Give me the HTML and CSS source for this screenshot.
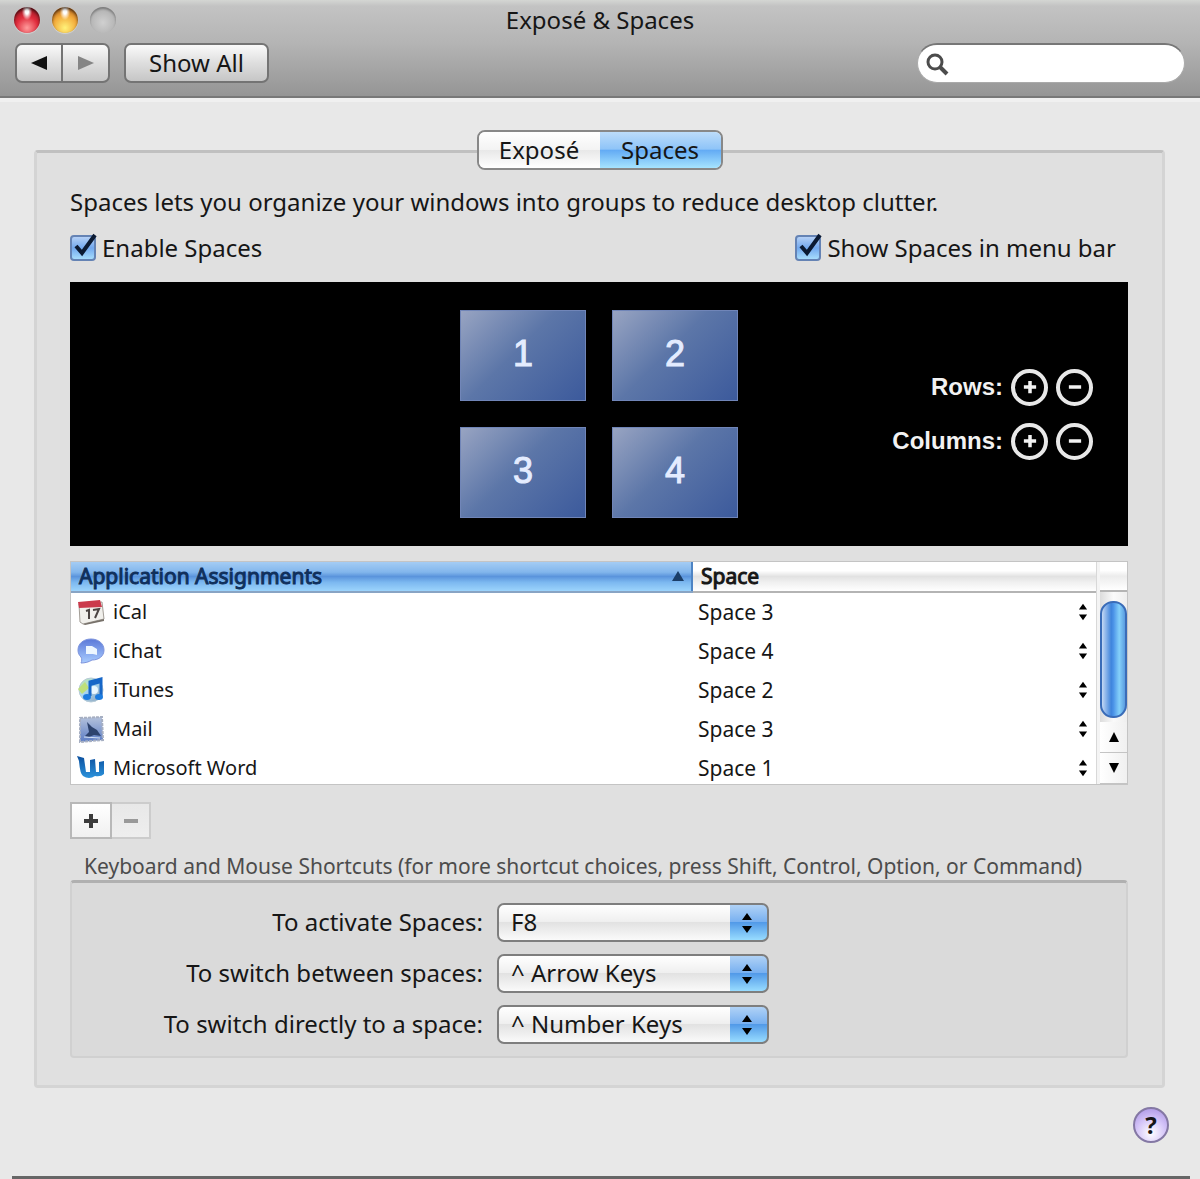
FILE: index.html
```html
<!DOCTYPE html>
<html lang="en">
<head>
<meta charset="utf-8">
<meta name="viewport" content="width=device-width, initial-scale=1">
<title>Exposé &amp; Spaces</title>
<link rel="stylesheet" href="styles.css">
</head>
<body>
<svg class="defs" aria-hidden="true">
  <defs>
    <symbol id="updown" viewBox="0 0 12 22"><path d="M6 1 11 8H1ZM6 21 1 14H11Z"/></symbol>
    <symbol id="check" viewBox="0 0 28 32"><path d="M6 14 12 21 25 3" fill="none" stroke="#0b1a33" stroke-width="4"/></symbol>
    <symbol id="plus" viewBox="0 0 16 16"><path d="M8 1V15M1 8H15" fill="none" stroke="currentColor" stroke-width="4"/></symbol>
    <symbol id="minus" viewBox="0 0 16 16"><path d="M1 8H15" fill="none" stroke="currentColor" stroke-width="4"/></symbol>
    <linearGradient id="chatFill" x1="0" y1="0" x2="0" y2="1"><stop offset="0" stop-color="#5b78d8"/><stop offset="1" stop-color="#a9ccff"/></linearGradient>
    <linearGradient id="discFill" x1="0" y1="0" x2="1" y2="1"><stop offset="0" stop-color="#c8e890"/><stop offset=".4" stop-color="#a8d8f4"/><stop offset="1" stop-color="#8d9fb4"/></linearGradient>
    <linearGradient id="stampFill" x1="0" y1="0" x2="0" y2="1"><stop offset="0" stop-color="#b4c2dc"/><stop offset="1" stop-color="#5b7cc4"/></linearGradient>
    <linearGradient id="wordFill" x1="0" y1="0" x2="0" y2="1"><stop offset="0" stop-color="#0b4f9e"/><stop offset="1" stop-color="#2c93dc"/></linearGradient>
  </defs>
</svg>

<div class="window">
  <header class="titlebar">
    <div class="title-row">
      <div class="lights">
        <button class="light light-close" aria-label="Close"></button>
        <button class="light light-minimize" aria-label="Minimize"></button>
        <button class="light light-zoom" aria-label="Zoom" disabled></button>
      </div>
      <h1 class="title">Exposé &amp; Spaces</h1>
    </div>
    <div class="toolbar">
      <div class="history">
        <button class="tool-button" aria-label="Back"><svg width="18" height="16" viewBox="0 0 18 16"><path d="M1 8 17 1V15Z" fill="#111"/></svg></button>
        <button class="tool-button" aria-label="Forward" disabled><svg width="18" height="16" viewBox="0 0 18 16"><path d="M17 8 1 1V15Z" fill="#858585"/></svg></button>
      </div>
      <button class="tool-button show-all">Show All</button>
      <label class="search">
        <svg width="24" height="24" viewBox="0 0 24 24" fill="none" stroke="#4c4c4c"><circle cx="9" cy="10" r="7" stroke-width="3"/><path d="M14 15 21 22" stroke-width="4"/></svg>
        <input type="search" aria-label="Search">
      </label>
    </div>
  </header>

  <main class="content">
    <nav class="tabs" aria-label="Panes">
      <button class="tab">Exposé</button>
      <button class="tab tab-selected">Spaces</button>
    </nav>

    <section class="panel">
      <p class="intro">Spaces lets you organize your windows into groups to reduce desktop clutter.</p>
      <div class="options">
        <label class="option"><span class="tick"><input type="checkbox" checked><svg><use href="#check"/></svg></span>Enable Spaces</label>
        <label class="option"><span class="tick"><input type="checkbox" checked><svg><use href="#check"/></svg></span>Show Spaces in menu bar</label>
      </div>

      <div class="preview">
        <div class="spaces">
          <div class="space">1</div>
          <div class="space">2</div>
          <div class="space">3</div>
          <div class="space">4</div>
        </div>
        <div class="counts">
          <span>Rows:</span>
          <button class="round" aria-label="Add row"><svg><use href="#plus"/></svg></button>
          <button class="round" aria-label="Remove row"><svg><use href="#minus"/></svg></button>
          <span>Columns:</span>
          <button class="round" aria-label="Add column"><svg><use href="#plus"/></svg></button>
          <button class="round" aria-label="Remove column"><svg><use href="#minus"/></svg></button>
        </div>
      </div>

      <div class="assignments">
        <table class="apps">
          <thead>
            <tr>
              <th class="col-app" scope="col"><div class="sorted">Application Assignments<svg width="14" height="12" viewBox="0 0 14 12"><path d="M7 1 13 11H1Z" fill="#1b3e68"/></svg></div></th>
              <th class="col-space" scope="col">Space</th>
            </tr>
          </thead>
          <tbody>
            <tr>
              <td><div class="app"><svg class="app-icon" viewBox="0 0 28 28"><path d="M2 6 25 4 27 21 6 26 3 24Z" fill="#f1f0ec" stroke="#a29d96"/><path d="M6 26 27 21V23L8 27Z" fill="#77716a"/><path d="M1 4 23 2 25 9 2 10Z" fill="#cb3a4c"/><path d="M9 13 12 12V21M16 12 22 11 18 20" fill="none" stroke="#4c4543" stroke-width="2"/></svg>iCal</div></td>
              <td><div class="popup"><select aria-label="Space for iCal"><option>Space 3</option></select><svg><use href="#updown"/></svg></div></td>
            </tr>
            <tr>
              <td><div class="app"><svg class="app-icon" viewBox="0 0 28 28"><path d="M14 2C22 2 27 7 27 13S22 23 15 23C12 25 8 26 4 26 5 24 5 22 4 20 2 18 1 16 1 13 1 7 6 2 14 2Z" fill="url(#chatFill)" stroke="#7d94dd"/><path d="M9 9H15L20 12V18L16 17H9Z" fill="#edf6ff"/></svg>iChat</div></td>
              <td><div class="popup"><select aria-label="Space for iChat"><option>Space 4</option></select><svg><use href="#updown"/></svg></div></td>
            </tr>
            <tr>
              <td><div class="app"><svg class="app-icon" viewBox="0 0 28 28"><circle cx="14" cy="14" r="12" fill="url(#discFill)" stroke="#b6cbd8"/><path d="M1 13 8 6 12 12 5 18Z" fill="#bfe07a"/><circle cx="17" cy="14" r="4" fill="#e9f7ff"/><path d="M13 20V6L24 3V20" fill="none" stroke="#1767c8" stroke-width="3"/><path d="M13 8 24 5" stroke="#1767c8" stroke-width="4"/><ellipse cx="10" cy="21" rx="4" ry="3" fill="#1c7ce0"/><ellipse cx="22" cy="21" rx="4" ry="3" fill="#1c7ce0"/></svg>iTunes</div></td>
              <td><div class="popup"><select aria-label="Space for iTunes"><option>Space 2</option></select><svg><use href="#updown"/></svg></div></td>
            </tr>
            <tr>
              <td><div class="app"><svg class="app-icon" viewBox="0 0 28 28"><path d="M3 3 25 2 26 25 3 27Z" fill="url(#stampFill)" stroke="#a6afc2" stroke-width="2" stroke-dasharray="3 1"/><path d="M10 7 15 12 20 15 24 21 17 20 12 22 8 21 12 17Z" fill="#2d436e"/><path d="M7 22 23 23" stroke="#d5e2f5"/></svg>Mail</div></td>
              <td><div class="popup"><select aria-label="Space for Mail"><option>Space 3</option></select><svg><use href="#updown"/></svg></div></td>
            </tr>
            <tr>
              <td><div class="app"><svg class="app-icon" viewBox="0 0 28 28"><path d="M0 2 7 4 9 18 13 18V6L18 5 19 18 22 18 22 8 27 7 27 20Q24 23 18 22 12 26 6 22 3 20 2 7Z" fill="url(#wordFill)"/></svg>Microsoft Word</div></td>
              <td><div class="popup"><select aria-label="Space for Microsoft Word"><option>Space 1</option></select><svg><use href="#updown"/></svg></div></td>
            </tr>
          </tbody>
        </table>
        <div class="scrollbar">
          <div class="corner"></div>
          <div class="track"><div class="thumb"></div></div>
          <button class="arrow" aria-label="Scroll up"><svg width="12" height="12" viewBox="0 0 12 12"><path d="M6 1 11 11H1Z"/></svg></button>
          <button class="arrow" aria-label="Scroll down"><svg width="12" height="12" viewBox="0 0 12 12"><path d="M6 11 1 1H11Z"/></svg></button>
        </div>
      </div>

      <div class="edit">
        <button class="edit-button" aria-label="Add application"><svg><use href="#plus"/></svg></button>
        <button class="edit-button" aria-label="Remove application" disabled><svg><use href="#minus"/></svg></button>
      </div>

      <h2 class="group-title">Keyboard and Mouse Shortcuts (for more shortcut choices, press Shift, Control, Option, or Command)</h2>
      <div class="group">
        <label for="activate">To activate Spaces:</label>
        <div class="menu"><select id="activate"><option>F8</option></select><svg><use href="#updown"/></svg></div>
        <label for="between">To switch between spaces:</label>
        <div class="menu"><select id="between"><option>^ Arrow Keys</option></select><svg><use href="#updown"/></svg></div>
        <label for="direct">To switch directly to a space:</label>
        <div class="menu"><select id="direct"><option>^ Number Keys</option></select><svg><use href="#updown"/></svg></div>
      </div>
    </section>

    <button class="help" aria-label="Help">?</button>
  </main>
</div>
</body>
</html>
```
FILE: styles.css
```css
* {
  box-sizing: border-box;
}

body {
  margin: 0;
  background: #e8e8e8;
  color: #161616;
  font-family: "Noto Sans", "Open Sans", sans-serif;
  font-size: 24px;
  line-height: 32px;
}

button,
input,
select {
  margin: 0;
  padding: 0;
  border: 0;
  color: inherit;
  font: inherit;
  appearance: none;
}

svg {
  display: block;
}

.defs {
  position: absolute;
  width: 0;
  height: 0;
}

.window {
  display: flex;
  flex-direction: column;
  min-height: 100vh;
}

.window::after {
  content: "";
  height: 3px;
  margin: 0 10px 0 12px;
  background: #666;
}

/* Title bar and toolbar */

.titlebar {
  padding-bottom: 13px;
  background: linear-gradient(#d4d6d3, #c3c3c3 6px, #b4b4b4 45%, #959595);
  border-bottom: 2px solid #787878;
}

.title-row {
  display: grid;
  grid-template-columns: 1fr auto 1fr;
  align-items: center;
  height: 43px;
  padding: 0 14px 4px;
}

.lights {
  display: flex;
  gap: 12px;
}

.light {
  width: 26px;
  height: 26px;
  border-radius: 50%;
  box-shadow: inset 0 2px 3px rgba(0, 0, 0, 0.6), 0 1px 1px rgba(255, 255, 255, 0.4);
}

.light-close {
  background: radial-gradient(ellipse at 50% 18%, #fff 0 8%, transparent 28%), radial-gradient(circle at 50% 80%, #ff9c9c, #e02c3c 45%, #7c1018);
}

.light-minimize {
  background: radial-gradient(ellipse at 50% 18%, #fff 0 8%, transparent 28%), radial-gradient(circle at 50% 80%, #fff27a, #f2a93a 50%, #a04a10);
}

.light-zoom {
  background: radial-gradient(circle at 50% 60%, #d0d0d0, #b8b8b8 55%, #8c8c8c);
  box-shadow: inset 0 2px 2px rgba(0, 0, 0, 0.25);
}

.title {
  margin: 0;
  font-size: 24px;
  font-weight: 400;
  line-height: 32px;
}

.toolbar {
  display: flex;
  align-items: center;
  gap: 14px;
  padding: 0 15px;
}

.history {
  display: flex;
}

.tool-button {
  display: flex;
  align-items: center;
  justify-content: center;
  width: 48px;
  height: 40px;
  border: 2px solid #747474;
  border-radius: 7px;
  background: linear-gradient(#fafafa, #dedede 50%, #c6c6c6);
}

.history .tool-button:first-child {
  border-radius: 7px 0 0 7px;
}

.history .tool-button:last-child {
  margin-left: -1px;
  border-left-width: 1px;
  border-radius: 0 7px 7px 0;
}

.show-all {
  width: 145px;
}

.search {
  display: flex;
  align-items: center;
  gap: 8px;
  width: 268px;
  height: 40px;
  margin-left: auto;
  padding: 0 16px 0 8px;
  border: 1px solid #aaa;
  border-top: 2px solid #777;
  border-radius: 20px;
  background: #fff;
}

.search input {
  flex: 1;
  min-width: 0;
  background: none;
  outline: 0;
}

/* Content */

.content {
  display: flex;
  flex: 1;
  flex-direction: column;
  padding: 28px 35px 0 34px;
  border-top: 4px solid #f0f0f0;
}

.tabs {
  display: flex;
  align-self: center;
  margin-bottom: -20px;
  border: 2px solid #888;
  border-radius: 8px;
  background: #f6f6f6;
  overflow: hidden;
  z-index: 1;
}

.tab {
  width: 121px;
  height: 36px;
  background: linear-gradient(#fff, #f3f3f3 50%, #e8e8e8 51%, #fff);
}

.tab-selected {
  background: linear-gradient(#bcdcfa, #8ec4f8 48%, #62aaf4 50%, #a6e4ff);
}

.panel {
  padding: 33px 34px 27px 33px;
  border: 3px solid #d4d4d4;
  border-top-color: #c0c0c0;
  border-radius: 4px;
  background: #e0e0e0;
}

.intro {
  margin: 0;
}

.options {
  display: flex;
  justify-content: space-between;
  margin-top: 14px;
  padding-right: 12px;
}

.option {
  display: flex;
  align-items: center;
  gap: 6px;
}

.tick {
  display: grid;
  width: 26px;
  height: 32px;
}

.tick > * {
  grid-area: 1 / 1;
}

.tick input {
  align-self: center;
  width: 26px;
  height: 26px;
  border: 2px solid #6583b4;
  border-radius: 4px;
  background: linear-gradient(#b4d0f6, #72a8ee 50%, #a6dcfc);
}

.tick svg {
  width: 28px;
  height: 32px;
  pointer-events: none;
}

.tick input:not(:checked) + svg {
  visibility: hidden;
}

/* Arrangement of the spaces */

.preview {
  display: grid;
  grid-template-columns: 1fr auto 1fr;
  align-items: center;
  margin-top: 18px;
  padding: 28px 35px;
  background: #000;
}

.spaces {
  display: grid;
  grid-column: 2;
  grid-template-columns: 126px 126px;
  gap: 26px;
}

.space {
  display: flex;
  align-items: center;
  justify-content: center;
  height: 91px;
  padding-bottom: 4px;
  border: 1px solid #7085b8;
  background: linear-gradient(135deg, #98a4c2, #5c76a8 45%, #3c5a9c);
  color: #e4ecff;
  font-family: "Liberation Sans", Arial, sans-serif;
  font-size: 36px;
  -webkit-text-stroke: 1px #e4ecff;
}

.counts {
  display: grid;
  grid-template-columns: auto 37px 37px;
  align-items: center;
  justify-self: end;
  gap: 17px 8px;
  color: #f2f2f2;
  font-family: "Liberation Sans", Arial, sans-serif;
  font-weight: 700;
  text-align: right;
}

.round {
  display: flex;
  align-items: center;
  justify-content: center;
  height: 37px;
  border: 4px solid #e8e8e8;
  border-radius: 50%;
  background: #000;
}

.round svg {
  width: 14px;
  height: 14px;
}

/* Application assignments */

.assignments {
  display: flex;
  height: 224px;
  margin-top: 15px;
  border: 1px solid #c4c4c4;
  background: #fff;
  overflow: hidden;
}

.apps {
  flex: 1;
  align-self: flex-start;
  border-collapse: collapse;
  table-layout: fixed;
  font-size: 20px;
  line-height: 28px;
}

.apps th {
  height: 30px;
  padding: 0 6px 2px 8px;
  border-bottom: 2px solid #b4b4b4;
  background: linear-gradient(#fff 30%, #e2e2e2 50%, #f0f0f0 70%, #fff);
  font-size: 21px;
  line-height: 26px;
  text-align: left;
  font-weight: 400;
  -webkit-text-stroke: 1px currentColor;
}

.apps .col-app {
  border-bottom-color: #88a4c4;
  border-right: 2px solid #4e84c4;
  background: linear-gradient(#a4ccf4, #82b6ec 35%, #5a94dc 50%, #7cb8f0 70%, #9cd4fc);
  color: #10305c;
}

.apps .col-space {
  width: 404px;
}

.sorted {
  display: flex;
  align-items: center;
  justify-content: space-between;
}

.apps td {
  height: 39px;
  padding: 0 6px;
}

.app {
  display: flex;
  align-items: center;
  gap: 8px;
}

.app-icon {
  width: 28px;
  height: 28px;
}

.popup,
.menu {
  display: grid;
  align-items: center;
}

.popup > *,
.menu > * {
  grid-area: 1 / 1;
}

.popup svg,
.menu svg {
  justify-self: end;
  pointer-events: none;
}

.popup svg {
  width: 10px;
  height: 18px;
  margin-right: 2px;
}

.popup select {
  background: none;
  font-size: 21px;
}

.scrollbar {
  display: flex;
  flex-direction: column;
  width: 31px;
  padding-left: 3px;
  border-left: 1px solid #d8d8d8;
  background: #f4f4f4;
}

.corner {
  height: 30px;
  border-bottom: 2px solid #b4b4b4;
  background: linear-gradient(#fff 30%, #ececec 50%, #fff);
}

.track {
  flex: 1;
  padding: 9px 0 4px;
  background: linear-gradient(90deg, #dcdcdc, #fafafa 50%, #eee);
}

.thumb {
  height: 100%;
  border: 2px solid #3a6cb8;
  border-radius: 13px;
  background: linear-gradient(90deg, #c4d8f4, #3e84dc 40%, #4c94e8 50%, #84d0fa 75%, #5a9ce0);
}

.arrow {
  display: flex;
  align-items: center;
  justify-content: center;
  height: 31px;
  border-bottom: 1px solid #c4c4c4;
  background: linear-gradient(90deg, #fff, #f0f0f0);
}

/* Add and remove buttons */

.edit {
  display: flex;
  margin-top: 17px;
}

.edit-button {
  display: flex;
  align-items: center;
  justify-content: center;
  width: 42px;
  height: 37px;
  border: 2px solid #b8b8b8;
  background: linear-gradient(#fff, #f0f0f0);
  color: #3c3c3c;
}

.edit-button:disabled {
  width: 39px;
  border-color: #ccc;
  border-left: 0;
  background: linear-gradient(#e8e8e8, #eee);
  color: #999;
}

.edit-button svg {
  width: 16px;
  height: 16px;
}

/* Shortcuts */

.group-title {
  margin: 13px 0 0;
  padding-left: 14px;
  color: #4c4c4c;
  font-size: 21px;
  font-weight: 400;
  line-height: 28px;
}

.group {
  display: grid;
  grid-template-columns: 39% 272px;
  align-items: center;
  gap: 12px 14px;
  padding: 20px 0 12px;
  border: 2px solid #d0d0d0;
  border-top: 3px solid #b0b0b0;
  border-radius: 4px;
  background: #dadada;
}

.group label {
  padding-bottom: 2px;
  text-align: right;
}

.menu select {
  width: 100%;
  height: 39px;
  padding: 0 50px 2px 12px;
  border: 2px solid #7e7e7e;
  border-radius: 7px;
  background:
    linear-gradient(#b0d2f6, #78b0f0 48%, #529ae8 50%, #98dcff) right / 37px 100% no-repeat,
    linear-gradient(#fff, #efefef 48%, #e2e2e2 50%, #fafafa);
}

.menu svg {
  width: 12px;
  height: 22px;
  margin-right: 16px;
}

/* Help */

.help {
  align-self: flex-end;
  width: 36px;
  height: 36px;
  margin: 19px -4px 33px 0;
  border: 2px solid #8478a4;
  border-radius: 50%;
  background: radial-gradient(circle at 50% 75%, #fff, #d4c4f8 50%, #a48ce0);
  font-weight: 700;
}
```
